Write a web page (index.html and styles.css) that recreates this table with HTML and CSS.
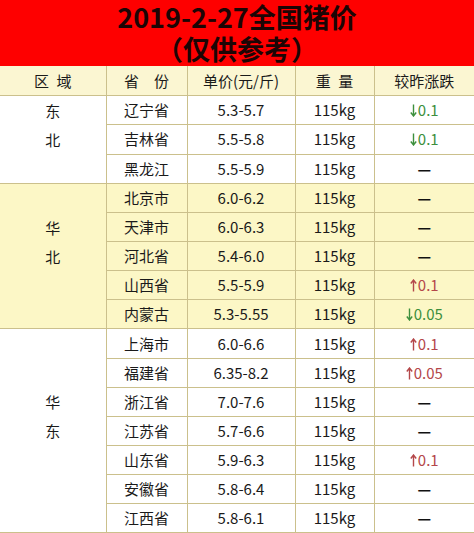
FILE: index.html
```html
<!DOCTYPE html>
<html lang="zh">
<head>
<meta charset="utf-8">
<link rel="stylesheet" href="styles.css">
</head>
<body>
<div class="title">
  <div class="t1">2019-2-27全国猪价</div>
  <div class="t2">（仅供参考）</div>
</div>
<table class="grid">
  <colgroup>
    <col class="c1"><col class="c2"><col class="c3"><col class="c4"><col class="c5">
  </colgroup>
  <thead>
    <tr class="head"><th>区&ensp;域</th><th>省&emsp;份</th><th>单价(元/斤)</th><th>重&ensp;量</th><th>较昨涨跌</th></tr>
  </thead>
  <tbody>
    <tr><td class="region" rowspan="3">东<br>北<br>&nbsp;</td><td>辽宁省</td><td>5.3-5.7</td><td>115kg</td><td class="down"><svg class="ar" viewBox="0 0 7 13"><path d="M3.5 0.5V12M0.8 8.5L3.5 12L6.2 8.5"/></svg>0.1</td></tr>
    <tr><td>吉林省</td><td>5.5-5.8</td><td>115kg</td><td class="down"><svg class="ar" viewBox="0 0 7 13"><path d="M3.5 0.5V12M0.8 8.5L3.5 12L6.2 8.5"/></svg>0.1</td></tr>
    <tr><td>黑龙江</td><td>5.5-5.9</td><td>115kg</td><td class="flat">—</td></tr>
    <tr class="y"><td class="region" rowspan="5">华<br>北<br>&nbsp;</td><td>北京市</td><td>6.0-6.2</td><td>115kg</td><td class="flat">—</td></tr>
    <tr class="y"><td>天津市</td><td>6.0-6.3</td><td>115kg</td><td class="flat">—</td></tr>
    <tr class="y"><td>河北省</td><td>5.4-6.0</td><td>115kg</td><td class="flat">—</td></tr>
    <tr class="y"><td>山西省</td><td>5.5-5.9</td><td>115kg</td><td class="up"><svg class="ar" viewBox="0 0 7 13"><path d="M3.5 12.5V1M0.8 4.5L3.5 1L6.2 4.5"/></svg>0.1</td></tr>
    <tr class="y"><td>内蒙古</td><td>5.3-5.55</td><td>115kg</td><td class="down"><svg class="ar" viewBox="0 0 7 13"><path d="M3.5 0.5V12M0.8 8.5L3.5 12L6.2 8.5"/></svg>0.05</td></tr>
    <tr><td class="region" rowspan="7">华<br>东<br>&nbsp;</td><td>上海市</td><td>6.0-6.6</td><td>115kg</td><td class="up"><svg class="ar" viewBox="0 0 7 13"><path d="M3.5 12.5V1M0.8 4.5L3.5 1L6.2 4.5"/></svg>0.1</td></tr>
    <tr><td>福建省</td><td>6.35-8.2</td><td>115kg</td><td class="up"><svg class="ar" viewBox="0 0 7 13"><path d="M3.5 12.5V1M0.8 4.5L3.5 1L6.2 4.5"/></svg>0.05</td></tr>
    <tr><td>浙江省</td><td>7.0-7.6</td><td>115kg</td><td class="flat">—</td></tr>
    <tr><td>江苏省</td><td>5.7-6.6</td><td>115kg</td><td class="flat">—</td></tr>
    <tr><td>山东省</td><td>5.9-6.3</td><td>115kg</td><td class="up"><svg class="ar" viewBox="0 0 7 13"><path d="M3.5 12.5V1M0.8 4.5L3.5 1L6.2 4.5"/></svg>0.1</td></tr>
    <tr><td>安徽省</td><td>5.8-6.4</td><td>115kg</td><td class="flat">—</td></tr>
    <tr><td>江西省</td><td>5.8-6.1</td><td>115kg</td><td class="flat">—</td></tr>
  </tbody>
</table>
</body>
</html>
```
FILE: styles.css
```css
html, body {
  margin: 0;
  padding: 0;
  background: #ffffff;
}
body {
  width: 474px;
  height: 533px;
  overflow: hidden;
  font-family: "Noto Sans CJK SC", "Noto Sans", sans-serif;
  color: #1a1a1a;
}
.title {
  background: #fe0000;
  height: 66px;
  display: flex;
  flex-direction: column;
  justify-content: center;
  align-items: center;
  font-weight: bold;
  font-size: 27px;
  line-height: 32px;
  color: #1c0505;
}
.t1, .t2 {
  white-space: nowrap;
}
.grid {
  width: 474px;
  border-collapse: collapse;
  table-layout: fixed;
  font-size: 15px;
}
.c1 { width: 106px; }
.c2 { width: 81px; }
.c3 { width: 108px; }
.c4 { width: 79px; }
.c5 { width: 100px; }
.grid th, .grid td {
  border: 1px solid #cbc08c;
  text-align: center;
  padding: 0;
  white-space: nowrap;
}
.grid tr > :first-child { border-left: none; }
.grid tr > :last-child { border-right: none; }
.head th {
  background: #fbf6d2;
  font-weight: normal;
  height: 29px;
  border-top: none;
}
.grid tbody td {
  height: 28.1px;
  line-height: 20px;
}
.grid tr.y td { background: #fcf7c6; }
.grid td.region {
  vertical-align: middle;
  line-height: 29px;
}
.ar {
  width: 7px;
  height: 13px;
  vertical-align: -1px;
  margin-right: 1px;
  fill: none;
  stroke: currentColor;
  stroke-width: 1.4;
}
.down { color: #3d8f3d; }
.up { color: #b4474a; }
.flat { color: #111111; font-weight: bold; }
```
